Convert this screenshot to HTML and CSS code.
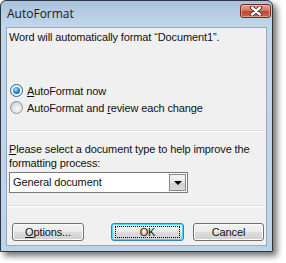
FILE: index.html
```html
<!DOCTYPE html>
<html>
<head>
<meta charset="utf-8">
<link rel="stylesheet" href="styles.css">
</head>
<body>
<div class="window">
  <div class="titlebar">
    <span class="title">AutoFormat</span>
    <span class="close">
      <svg width="16" height="10" viewBox="0 0 16 10">
        <path d="M4 1.5 L12 8.5 M12 1.5 L4 8.5" stroke="#4e2a24" stroke-width="4.2" stroke-linecap="round"/>
        <path d="M4 1.5 L12 8.5 M12 1.5 L4 8.5" stroke="#ffffff" stroke-width="2.4" stroke-linecap="round"/>
      </svg>
    </span>
  </div>
  <div class="client">
    <p class="intro">Word will automatically format “Document1”.</p>
    <div class="radios">
      <div class="radio"><span class="dot checked"></span><span><u>A</u>utoFormat now</span></div>
      <div class="radio"><span class="dot"></span><span>AutoFormat and <u>r</u>eview each change</span></div>
    </div>
    <div class="sep sep1"></div>
    <p class="prompt"><u>P</u>lease select a document type to help improve the<br>formatting process:</p>
    <div class="select"><span class="value">General document</span><span class="arrow"><span class="tri"></span></span></div>
    <div class="sep sep2"></div>
    <div class="buttons">
      <span class="btn options"><span><u>O</u>ptions...</span></span>
      <span class="spacer"></span>
      <span class="btn ok default"><span class="focus">OK</span></span>
      <span class="btn cancel"><span>Cancel</span></span>
    </div>
  </div>
</div>
</body>
</html>
```

FILE: styles.css
```css
html, body {
  margin: 0;
  padding: 0;
  background: #ffffff;
}
body {
  width: 286px;
  height: 263px;
  overflow: hidden;
}
.window {
  box-sizing: border-box;
  width: 273px;
  height: 252px;
  border: 1px solid #2e3440;
  border-radius: 6px 6px 0 0;
  background: linear-gradient(#a9c2dc, #c2d7ec 26px, #bdd3ea);
  box-shadow: 4px 4px 6px rgba(0,0,0,0.55);
  display: flex;
  flex-direction: column;
  padding: 0 5px 5px 5px;
  font-family: "Liberation Sans", Arial, sans-serif;
}
.titlebar {
  height: 26px;
  display: flex;
  align-items: flex-start;
  justify-content: space-between;
}
.title {
  font-family: "Open Sans", sans-serif;
  font-size: 12px;
  color: #1a1a1a;
  margin: 6px 0 0 1px;
  line-height: 14px;
}
.close {
  margin: 3px -4px 0 0;
  box-sizing: border-box;
  width: 31px;
  height: 14px;
  border: 1px solid #6a2d24;
  border-radius: 3px;
  background: linear-gradient(#e6a195, #d67766 45%, #c2432f 55%, #cf6a4f);
  display: flex;
  align-items: center;
  justify-content: center;
  box-shadow: inset 0 0 0 1px rgba(255,220,210,0.45);
}
.client {
  flex: 1;
  background: #f0f0f0;
  border: 1px solid #95a8bd;
  display: flex;
  flex-direction: column;
  padding: 0 1px;
  font-size: 11px;
  line-height: 14px;
  letter-spacing: -0.12px;
  color: #111;
}
.intro {
  margin: 2px 0 0 1px;
  white-space: nowrap;
}
.radios {
  margin-top: 38px;
  display: flex;
  flex-direction: column;
}
.radio {
  height: 17px;
  display: flex;
  align-items: center;
  gap: 4px;
  padding-left: 2px;
  white-space: nowrap;
}
.dot {
  box-sizing: border-box;
  width: 13px;
  height: 13px;
  border-radius: 50%;
  border: 1px solid #8f8f8f;
  background: radial-gradient(circle at 60% 65%, #fbfbfb, #d4d4d4 70%, #bcbcbc);
  position: relative;
  flex: none;
}
.dot.checked {
  border-color: #2c628b;
  background: radial-gradient(circle, #f4f4f4 60%, #cfd9e3);
}
.dot.checked::after {
  content: "";
  position: absolute;
  left: 2px;
  top: 2px;
  width: 7px;
  height: 7px;
  border-radius: 50%;
  background: radial-gradient(circle at 40% 35%, #9fe0ff, #1e84c9 55%, #0f3f73);
}
.sep {
  height: 1px;
  background: #d5dfe5;
  border-bottom: 1px solid #ffffff;
}
.sep1 { margin-top: 14px; }
.prompt {
  margin: 10px 0 0 1px;
  white-space: nowrap;
}
.select {
  margin: 2px 0 0 1px;
  box-sizing: border-box;
  width: 179px;
  height: 21px;
  border: 1px solid #7a7a7a;
  background: #ffffff;
  display: flex;
  align-items: stretch;
  padding: 1px;
}
.value {
  flex: 1;
  padding-left: 2px;
  line-height: 17px;
}
.arrow {
  box-sizing: border-box;
  width: 17px;
  border: 1px solid #8a8a8a;
  background: linear-gradient(#f6f6f6, #e6e6e6 50%, #d0d0d0 51%, #dadada);
  display: flex;
  align-items: center;
  justify-content: center;
}
.tri {
  width: 0;
  height: 0;
  border-left: 4px solid transparent;
  border-right: 4px solid transparent;
  border-top: 4px solid #000;
  margin-top: 1px;
}
.sep2 { margin-top: 12px; }
.buttons {
  margin-top: 16px;
  display: flex;
  padding: 0 0 0 4px;
}
.spacer { flex: 1; }
.btn {
  box-sizing: border-box;
  height: 18px;
  border: 1px solid #707070;
  border-radius: 3px;
  background: linear-gradient(#f2f2f2, #ebebeb 49%, #dddddd 50%, #cfcfcf);
  display: flex;
  align-items: center;
  justify-content: center;
  box-shadow: inset 0 0 0 1px #fcfcfc;
}
.options { width: 72px; }
.ok { width: 73px; margin-right: 9px; }
.cancel { width: 71px; margin-right: 1px; }
.default {
  border-color: #3c7fb1;
  box-shadow: inset 0 0 0 1px #48d8fb;
}
.focus {
  box-sizing: border-box;
  width: 65px;
  height: 12px;
  border: 1px dotted #000;
  display: flex;
  align-items: center;
  justify-content: center;
}
```
